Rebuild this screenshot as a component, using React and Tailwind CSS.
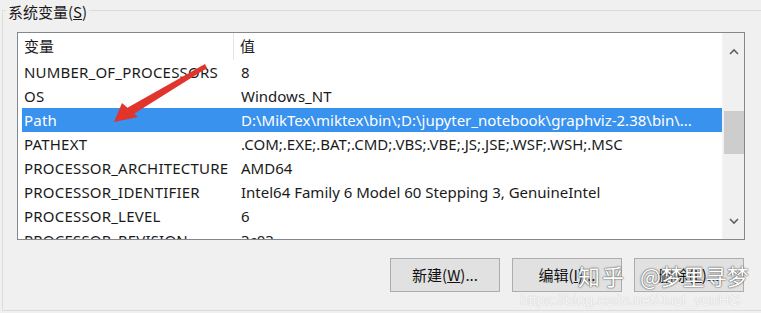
import React from "react";

const rows = [
  ["NUMBER_OF_PROCESSORS", "8"],
  ["OS", "Windows_NT"],
  ["Path", "D:\\MikTex\\miktex\\bin\\;D:\\jupyter_notebook\\graphviz-2.38\\bin\\..."],
  ["PATHEXT", ".COM;.EXE;.BAT;.CMD;.VBS;.VBE;.JS;.JSE;.WSF;.WSH;.MSC"],
  ["PROCESSOR_ARCHITECTURE", "AMD64"],
  ["PROCESSOR_IDENTIFIER", "Intel64 Family 6 Model 60 Stepping 3, GenuineIntel"],
  ["PROCESSOR_LEVEL", "6"],
  ["PROCESSOR_REVISION", "3c03"],
];

const font = { fontFamily: '"Noto Sans", "Noto Sans CJK SC", sans-serif' };

function Btn({ label, k }) {
  return (
    <div className="w-[110px] h-[34px] bg-[#e1e1e1] border border-[#adadad] flex items-center justify-center text-[15px] text-[#111]">
      <span>
        {label}(<span className="underline">{k}</span>)...
      </span>
    </div>
  );
}

export default function App() {
  return (
    <div
      className="relative w-[761px] h-[313px] bg-[#f0f0f0] overflow-hidden text-[#1a1a1a]"
      style={font}
    >
      <div className="mt-[10px] ml-[2px] w-[800px] h-[301px] border-l border-t border-b border-[#dcdcdc] pl-[14px] pt-[21px]">
        <div className="w-[728px] h-[208px] border border-[#828790] bg-white flex">
          <div className="w-[704px] flex flex-col overflow-hidden">
            <div className="h-[27px] shrink-0 flex items-center text-[15px]">
              <div className="w-[216px] pl-[6px] h-full flex items-center border-r border-[#e5e5e5]">变量</div>
              <div className="pl-[6px]">值</div>
            </div>
            {rows.map(([k, v], i) => (
              <div
                key={k}
                className={
                  "h-[24px] shrink-0 ml-[4px] flex items-center text-[15px] whitespace-nowrap " +
                  (i === 2 ? "bg-[#3a92ef] text-white" : "")
                }
              >
                <div className="w-[219px] pl-[2px] tracking-[0.2px]">{k}</div>
                <div>{v}</div>
              </div>
            ))}
          </div>
          <div className="w-[22px] border-l border-[#f4f4f4] bg-[#f0f0f0] flex flex-col items-center">
            <div className="h-[22px] flex items-end justify-center">
              <svg width="10" height="7" viewBox="0 0 10 7">
                <path d="M1 6 L5 2 L9 6" stroke="#606060" strokeWidth="1.6" fill="none" />
              </svg>
            </div>
            <div className="h-[56px]" />
            <div className="w-[20px] h-[43px] bg-[#cdcdcd]" />
            <div className="flex-1" />
            <div className="h-[22px] flex items-start justify-center pt-[1px]">
              <svg width="10" height="7" viewBox="0 0 10 7">
                <path d="M1 1 L5 5 L9 1" stroke="#606060" strokeWidth="1.6" fill="none" />
              </svg>
            </div>
          </div>
        </div>
        <div className="mt-[18px] ml-[373px] flex gap-[12px]" style={{ fontFamily: '"Noto Sans CJK SC", sans-serif' }}>
          <Btn label="新建" k="W" />
          <Btn label="编辑" k="I" />
          <Btn label="删除" k="L" />
        </div>
      </div>

      <div className="absolute left-[6px] top-[1px] px-[2px] bg-[#f0f0f0] text-[15px] text-[#1a1a1a]" style={{ fontFamily: '"Noto Sans CJK SC", sans-serif' }}>
        系统变量(<span className="underline">S</span>)
      </div>

      <svg className="absolute left-0 top-0" width="761" height="313">
        <polygon points="205,64 207,68 132,115 127,108" fill="#e0342c" />
        <polygon points="114,122 122,103 138,117" fill="#e0342c" />
      </svg>

      <div
        className="absolute left-[578px] top-[261px] text-[22px] leading-[28px] whitespace-nowrap text-white flex gap-[14px]"
        style={{ fontFamily: '"Noto Sans CJK SC", sans-serif', textShadow: "0 0 2px #555, 0 0 1px #333" }}
      >
        <span className="tracking-[2px]">知乎</span>
        <span>@梦里寻梦</span>
      </div>
      <div
        className="absolute left-[520px] top-[291px] text-[15px] leading-[18px] whitespace-nowrap text-[#f6f6f6]"
        style={{ fontFamily: '"Liberation Sans", sans-serif', textShadow: "0 0 1px #bbb" }}
      >
        https://blog.csdn.net/Just_youHG
      </div>
    </div>
  );
}
